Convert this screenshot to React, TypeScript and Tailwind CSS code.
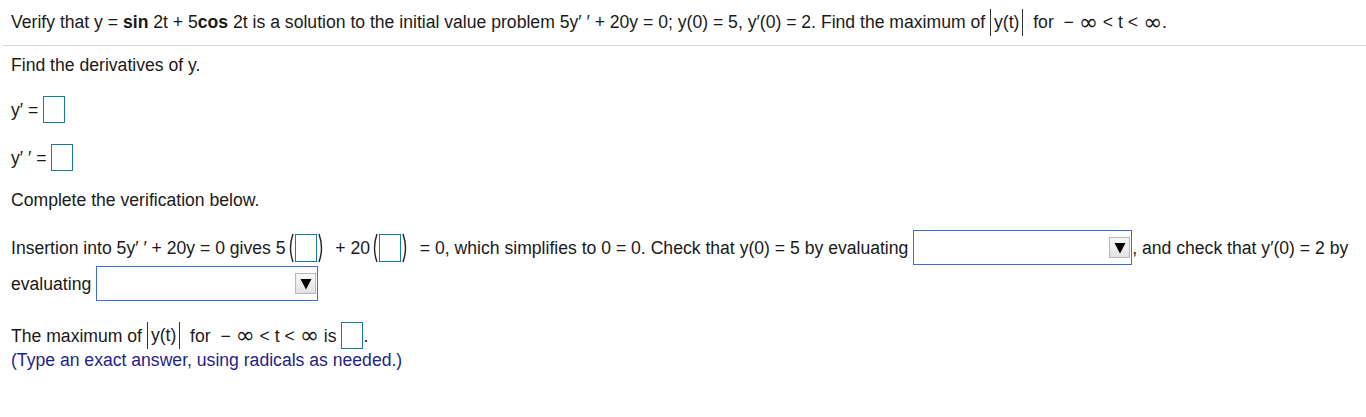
import React from 'react';

function AnswerBox({ className = '' }: { className?: string }) {
  return <span className={`inline-block w-[22px] h-[27px] border border-[#1a7c99] bg-white shrink-0 ${className}`} />;
}

function Paren({ side }: { side: 'l' | 'r' }) {
  return (
    <svg width="9" height="30" viewBox="0 0 9 30" className="shrink-0">
      {side === 'l' ? (
        <path d="M7 1 Q2 15 7 29" fill="none" stroke="#222" strokeWidth="1.4" />
      ) : (
        <path d="M2 1 Q7 15 2 29" fill="none" stroke="#222" strokeWidth="1.4" />
      )}
    </svg>
  );
}

function Dropdown({ width }: { width: string }) {
  return (
    <span className={`flex items-center justify-end h-[35px] ${width} border border-[#3a6fd0] bg-white pr-[1px] shrink-0`}>
      <span className="flex items-center justify-center w-[21px] h-[21px] border border-[#b8b8b8] bg-gradient-to-b from-[#f8f8f8] to-[#e2e2e2]">
        <svg width="12" height="12" viewBox="0 0 12 12">
          <polygon points="0.5,1 11.5,1 6,11.5" fill="#000" />
        </svg>
      </span>
    </span>
  );
}

function Abs({ children }: { children: React.ReactNode }) {
  return (
    <span className="inline-block border-x border-[#333] px-[3px] leading-[27px]">{children}</span>
  );
}

function Inf() {
  return (
    <span className="inline-block text-[23px] leading-none" style={{ fontFamily: '"DejaVu Sans", sans-serif' }}>
      ∞
    </span>
  );
}

export default function App() {
  return (
    <div className="w-[1366px] h-[417px] bg-white text-[#1a1a1a] text-[17.6px] leading-[20px] overflow-hidden" style={{ fontFamily: '"Liberation Sans", Arial, sans-serif' }}>
      <div className="pl-[11px] mt-[12px] h-[20px] flex items-center whitespace-pre">
        <span>Verify that y = </span>
        <b>sin</b>
        <span> 2t + 5</span>
        <b>cos</b>
        <span> 2t is a solution to the initial value problem 5y′ ′ + 20y = 0; y(0) = 5, y′(0) = 2. Find the maximum of </span>
        <Abs>y(t)</Abs>
        <span>  for  − </span>
        <Inf />
        <span> &lt; t &lt; </span>
        <Inf />
        <span>.</span>
      </div>

      <div className="ml-[3px] mt-[13px] border-t border-[#d4d4de]" />

      <div className="px-[11px]">
        <div className="mt-[9px] h-[20px] flex items-center">Find the derivatives of y.</div>

        <div className="mt-[21px] flex items-center h-[27px] whitespace-pre">
          <span>y′ = </span>
          <AnswerBox />
        </div>

        <div className="mt-[21px] flex items-center h-[27px] whitespace-pre">
          <span>y′ ′ = </span>
          <AnswerBox />
        </div>

        <div className="mt-[19px] h-[20px] flex items-center">Complete the verification below.</div>

        <div className="mt-[20px] h-[35px] flex items-center whitespace-pre">
          <span>Insertion into 5y′ ′ + 20y = 0 gives 5</span>
          <Paren side="l" />
          <AnswerBox className="h-[28px]" />
          <Paren side="r" />
          <span>  + 20</span>
          <Paren side="l" />
          <AnswerBox className="h-[28px]" />
          <Paren side="r" />
          <span>  = 0, which simplifies to 0 = 0. Check that y(0) = 5 by evaluating </span>
          <Dropdown width="w-[219px]" />
          <span>, and check that y′(0) = 2 by</span>
        </div>

        <div className="mt-[1px] h-[35px] flex items-center whitespace-pre">
          <span>evaluating </span>
          <Dropdown width="w-[222px]" />
        </div>

        <div className="mt-[21px] h-[27px] flex items-center whitespace-pre">
          <span>The maximum of </span>
          <Abs>y(t)</Abs>
          <span>  for  − </span>
          <Inf />
          <span> &lt; t &lt; </span>
          <Inf />
          <span> is </span>
          <AnswerBox />
          <span>.</span>
        </div>

        <div className="mt-[1px] h-[20px] flex items-center text-[#1f1f8a]">(Type an exact answer, using radicals as needed.)</div>
      </div>
    </div>
  );
}
